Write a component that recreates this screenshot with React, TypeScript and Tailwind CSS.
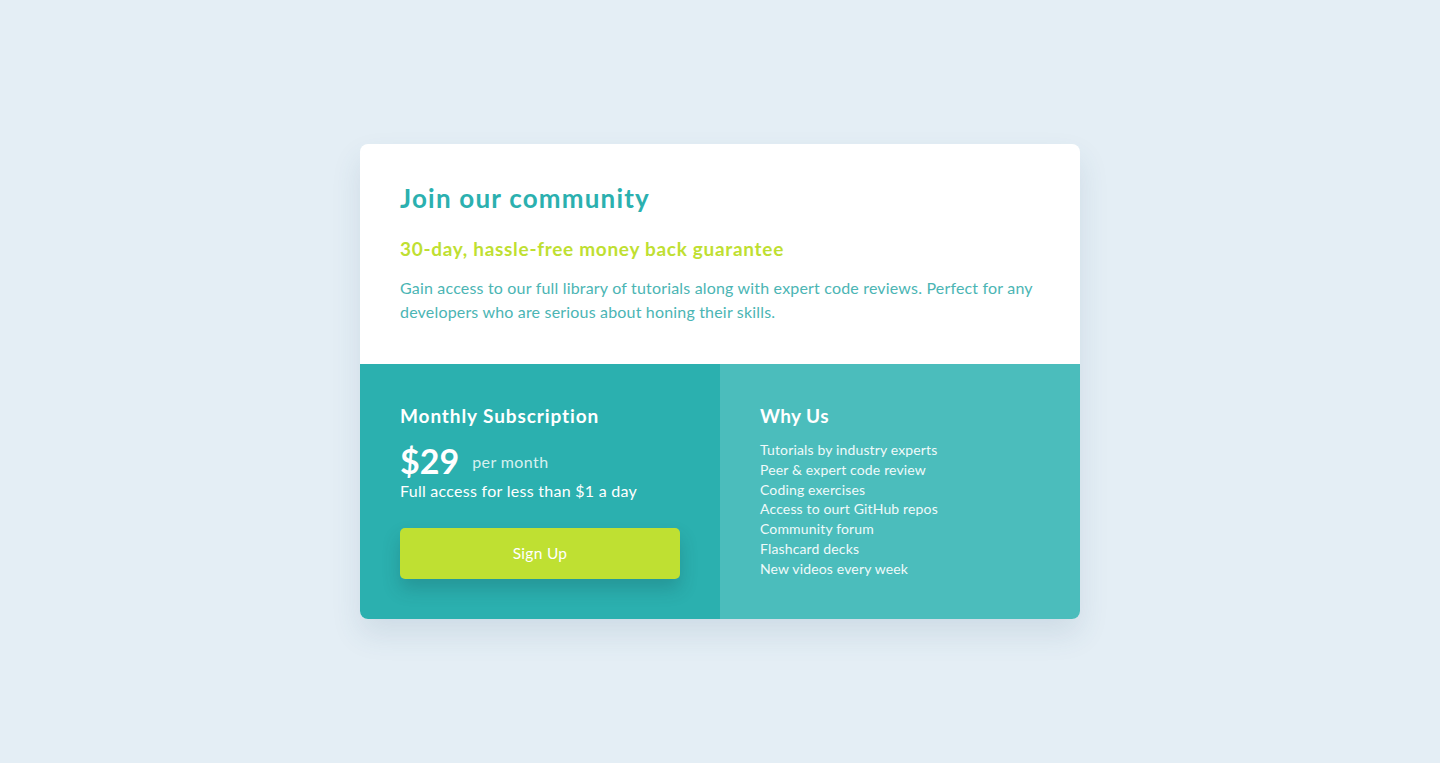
import React from "react";

export default function App() {
  const items = [
    "Tutorials by industry experts",
    "Peer & expert code review",
    "Coding exercises",
    "Access to ourt GitHub repos",
    "Community forum",
    "Flashcard decks",
    "New videos every week",
  ];
  return (
    <div
      className="min-h-[763px] w-full bg-[#e4eef5] flex items-start justify-center pt-[144px]"
      style={{ fontFamily: "Lato, 'Liberation Sans', sans-serif" }}
    >
      <div className="w-[720px] rounded-lg overflow-hidden bg-white shadow-[0_15px_30px_rgba(48,88,120,0.12)]">
        <div className="px-10 pt-[37px] pb-10 h-[220px]">
          <h1 className="text-[26px] font-bold text-[#2bb0af] leading-[34px] tracking-[1.2px]">
            Join our community
          </h1>
          <h2 className="mt-[22px] text-[19px] font-bold text-[#bfdf32] leading-6 tracking-[0.7px]">
            30-day, hassle-free money back guarantee
          </h2>
          <p className="mt-[15px] text-[16px] leading-6 text-[#4bb5b4] tracking-[0.18px]">
            Gain access to our full library of tutorials along with expert code reviews. Perfect for any developers who are serious about honing their skills.
          </p>
        </div>
        <div className="grid grid-cols-2 h-[255px]">
          <div className="bg-[#2bb0af] px-10 pt-[40px] text-white">
            <h3 className="text-[19px] font-bold leading-6 tracking-[0.9px]">Monthly Subscription</h3>
            <div className="mt-[13px] flex items-center gap-[13px]">
              <span className="text-[34px] font-bold leading-[40px]">$29</span>
              <span className="text-[16px] text-[#d7f0ef] leading-6 tracking-[0.4px] mt-[1px]">per month</span>
            </div>
            <p className="mt-[-2px] text-[16px] leading-6 tracking-[0.27px]">Full access for less than $1 a day</p>
            <button className="mt-[25px] w-[280px] h-[51px] rounded-[5px] bg-[#bfe032] text-[15.5px] text-white tracking-[0.3px] shadow-[0_10px_18px_rgba(20,60,70,0.22)]">
              Sign Up
            </button>
          </div>
          <div className="bg-[#4bbdbc] px-10 pt-[40px] text-white">
            <h3 className="text-[19px] font-bold leading-6 tracking-[0.4px]">Why Us</h3>
            <ul className="mt-[12px] text-[14px] leading-[19.8px] text-[#f0fafa] tracking-[0.15px]">
              {items.map((t) => (
                <li key={t}>{t}</li>
              ))}
            </ul>
          </div>
        </div>
      </div>
    </div>
  );
}
